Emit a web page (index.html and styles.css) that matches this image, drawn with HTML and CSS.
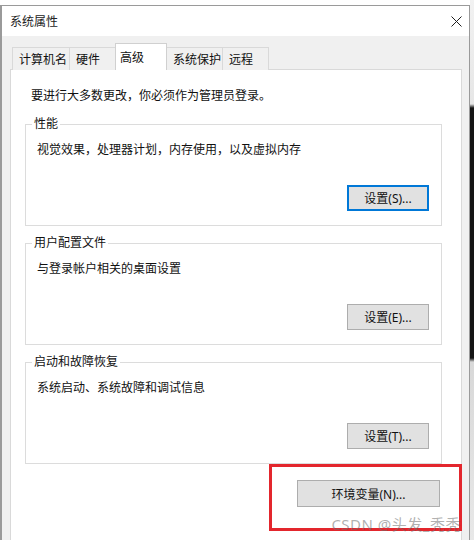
FILE: index.html
```html
<!DOCTYPE html>
<html lang="zh-CN">
  <head>
    <meta charset="UTF-8" />
    <meta name="viewport" content="width=device-width, initial-scale=1.0" />
    <title>系统属性</title>
    <link rel="stylesheet" href="styles.css">
  </head>
  <body>
    <div class="screen">
      <div class="window">
        <div class="titlebar">
          <span class="title">系统属性</span>
          <svg class="close" width="11" height="11" viewBox="0 0 11 11">
            <path d="M0.5 0.5 L10.5 10.5 M10.5 0.5 L0.5 10.5" stroke="#1e1e1e" stroke-width="1" fill="none" />
          </svg>
        </div>

        <div class="body">
          <div class="tabs">
            <div class="tab tab-name">计算机名</div>
            <div class="tab tab-hw">硬件</div>
            <div class="tab tab-adv active">高级</div>
            <div class="tab tab-prot">系统保护</div>
            <div class="tab tab-remote">远程</div>
          </div>

          <div class="panel">
            <p class="intro">要进行大多数更改，你必须作为管理员登录。</p>

            <fieldset class="group">
              <legend>性能</legend>
              <p class="desc">视觉效果，处理器计划，内存使用，以及虚拟内存</p>
              <div class="actions">
                <button class="btn default">设置(S)...</button>
              </div>
            </fieldset>

            <fieldset class="group">
              <legend>用户配置文件</legend>
              <p class="desc">与登录帐户相关的桌面设置</p>
              <div class="actions">
                <button class="btn">设置(E)...</button>
              </div>
            </fieldset>

            <fieldset class="group">
              <legend>启动和故障恢复</legend>
              <p class="desc">系统启动、系统故障和调试信息</p>
              <div class="actions">
                <button class="btn">设置(T)...</button>
              </div>
            </fieldset>

            <!-- highlighted environment variables button -->
            <div class="mark">
              <button class="btn env">环境变量(N)...</button>
            </div>
          </div>
        </div>
      </div>
      <div class="edge"></div>
      <div class="watermark">CSDN @头发_秃秃</div>
    </div>
  </body>
</html>
```

FILE: styles.css
```css
* {
  box-sizing: border-box;
}
body {
  margin: 0;
  background: #ffffff;
  font-family: "Noto Sans", "Noto Sans CJK SC", sans-serif;
  font-size: 12px;
  color: #111;
}
.screen {
  position: relative;
  width: 474px;
  height: 540px;
  overflow: hidden;
  display: flex;
  align-items: flex-start;
}
.window {
  flex: none;
  width: 470px;
  height: 600px;
  margin-top: 5px;
  border: 1px solid #9a9a9a;
  border-left: 2px solid #9a9a9a;
  background: #f0f0f0;
}
.edge {
  flex: 1;
  align-self: stretch;
  background: linear-gradient(
    to bottom,
    #f2f2f2 0,
    #e6e6e6 104px,
    #151515 108px,
    #151515 358px,
    #d8d8d8 362px,
    #e8e8e8 100%
  );
}
.titlebar {
  height: 30px;
  background: #ffffff;
  display: flex;
  align-items: center;
  justify-content: space-between;
  padding: 1px 7px 0 8px;
}
.title {
  line-height: 16px;
  color: #222;
}
.close {
  display: block;
}
.tabs {
  display: flex;
  align-items: flex-end;
  padding: 7px 0 0 10px;
}
.tab {
  height: 23px;
  padding: 4px 0 0 6px;
  line-height: 16px;
  border: 1px solid #d9d9d9;
  border-bottom: none;
  background: #f0f0f0;
  margin-right: -1px;
}
.tab-name {
  width: 58px;
}
.tab-hw {
  width: 47px;
}
.tab-adv {
  width: 52px;
}
.tab-prot {
  width: 57px;
}
.tab-remote {
  width: 47px;
}
.tab.active {
  position: relative;
  z-index: 1;
  height: 27px;
  padding: 6px 0 0 4px;
  background: #ffffff;
  border-color: #d0d0d0;
}
.panel {
  margin: -1px 7px 0 8px;
  padding: 18px 19px 40px 14px;
  background: #ffffff;
  border: 1px solid #d9d9d9;
}
.intro {
  margin: 0 0 0 6px;
  line-height: 16px;
}
.group {
  margin: 12px 0 0 0;
  padding: 0 12px 14px 11px;
  border: 1px solid #dcdcdc;
}
.group + .group {
  margin-top: 9px;
}
.group legend {
  margin-left: -5px;
  padding: 0 2px;
  line-height: 16px;
}
.desc {
  margin: 10px 0 0 0;
  line-height: 16px;
}
.actions {
  display: flex;
  justify-content: flex-end;
  margin-top: 27px;
}
.btn {
  width: 82px;
  height: 26px;
  padding: 0;
  font: inherit;
  color: #111;
  background: #e1e1e1;
  border: 1px solid #adadad;
  display: flex;
  align-items: center;
  justify-content: center;
}
.btn.default {
  border: 2px solid #0078d7;
}
.mark {
  display: flex;
  justify-content: flex-end;
  width: 193px;
  height: 67px;
  margin: 0 -20px 0 auto;
  padding: 13px 19px 0 0;
  border: 3px solid #e3262d;
}
.btn.env {
  width: 143px;
  height: 27px;
}
.watermark {
  position: absolute;
  right: 13px;
  bottom: 6px;
  font-size: 15px;
  line-height: 20px;
  color: rgba(110, 110, 110, 0.55);
  letter-spacing: 0.5px;
}
```
